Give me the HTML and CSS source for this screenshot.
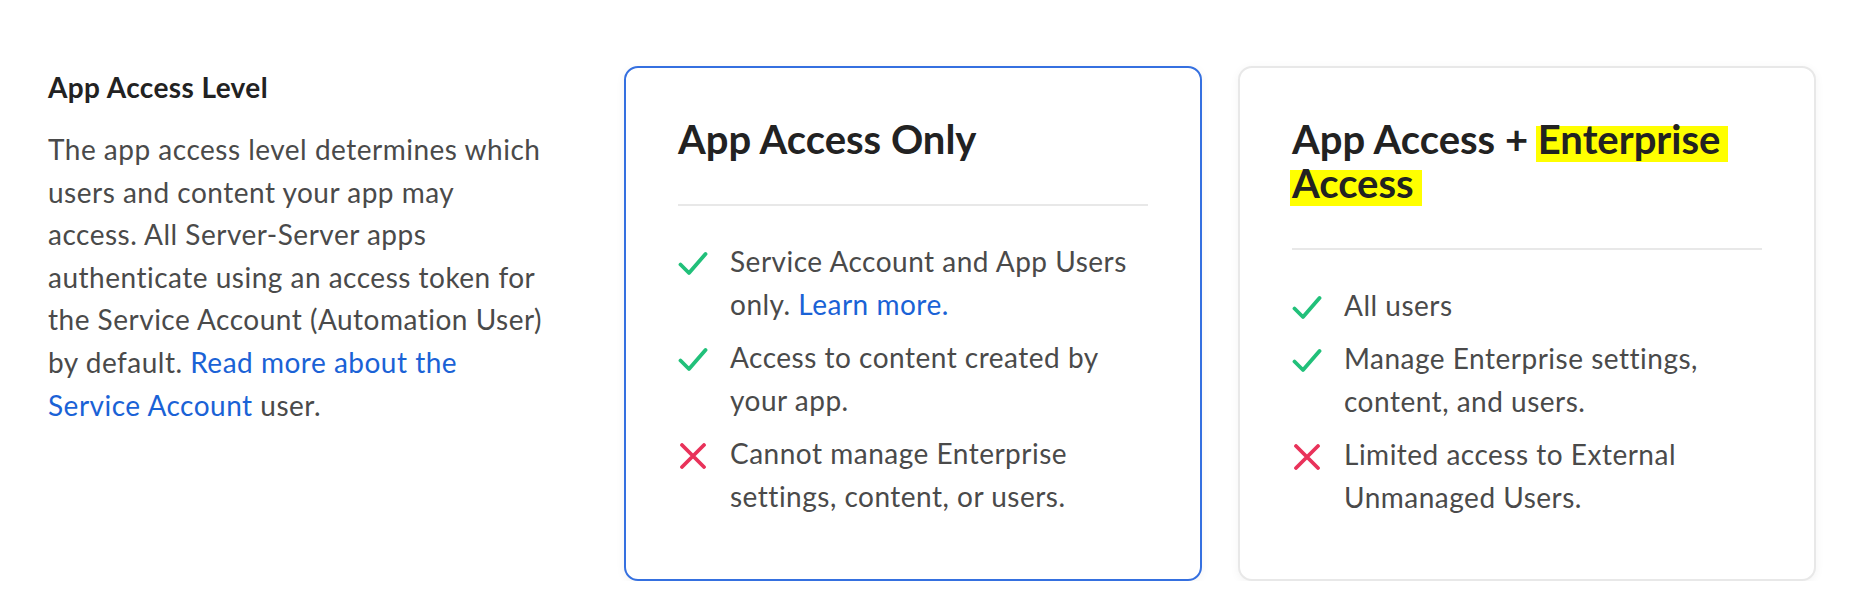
FILE: index.html
```html
<!DOCTYPE html>
<html lang="en">
<head>
  <meta charset="UTF-8" />
  <title>App Access Level</title>
  <link rel="stylesheet" href="styles.css">
</head>
<body>

  <div class="access-level">

    <!-- Description -->
    <div class="intro">
      <h3 class="intro-title">App Access Level</h3>
      <p class="intro-text">
        The app access level determines which users and content your app may access.
        All Server-Server apps authenticate using an access token for the Service Account
        (Automation User) by default. <a href="#">Read more about the Service Account</a> user.
      </p>
    </div>

    <!-- Option cards -->
    <div class="cards">
      <div class="card selected">
        <h2 class="card-title">App Access Only</h2>
        <ul class="features">
          <li class="yes">
            <svg class="icon" viewBox="0 0 30 26"><path d="M2.5 13.5 L11 22 L27.5 3" /></svg>
            <span>Service Account and App Users only. <a href="#">Learn more.</a></span>
          </li>
          <li class="yes">
            <svg class="icon" viewBox="0 0 30 26"><path d="M2.5 13.5 L11 22 L27.5 3" /></svg>
            <span>Access to content created by your app.</span>
          </li>
          <li class="no">
            <svg class="icon" viewBox="0 0 30 26"><path d="M4 2 L26 24 M26 2 L4 24" /></svg>
            <span>Cannot manage Enterprise settings, content, or users.</span>
          </li>
        </ul>
      </div>

      <div class="card">
        <h2 class="card-title">App Access + <mark>Enterprise Access</mark></h2>
        <ul class="features">
          <li class="yes">
            <svg class="icon" viewBox="0 0 30 26"><path d="M2.5 13.5 L11 22 L27.5 3" /></svg>
            <span>All users</span>
          </li>
          <li class="yes">
            <svg class="icon" viewBox="0 0 30 26"><path d="M2.5 13.5 L11 22 L27.5 3" /></svg>
            <span>Manage Enterprise settings, content, and users.</span>
          </li>
          <li class="no">
            <svg class="icon" viewBox="0 0 30 26"><path d="M4 2 L26 24 M26 2 L4 24" /></svg>
            <span>Limited access to External Unmanaged Users.</span>
          </li>
        </ul>
      </div>
    </div>

  </div>

</body>
</html>
```

FILE: styles.css
```css
* {
  margin: 0;
  padding: 0;
  box-sizing: border-box;
}

body {
  font-family: Lato, "Open Sans", sans-serif;
  background-color: #fff;
  color: #4a4a4a;
}

a {
  color: #1a62d6;
  text-decoration: none;
}

.access-level {
  display: flex;
  align-items: flex-start;
  padding: 66px 43px 0 48px;
}

/* left column */
.intro {
  flex: 0 0 576px;
  padding-right: 75px;
}

.intro-title {
  font-size: 28px;
  font-weight: bold;
  color: #222;
  line-height: 32px;
  letter-spacing: 0.4px;
  margin-top: 5px;
}

.intro-text {
  margin-top: 25px;
  font-size: 28px;
  line-height: 42.6px;
  letter-spacing: 0.5px;
}

/* cards */
.cards {
  display: flex;
  gap: 36px;
}

.card {
  width: 578px;
  border: 2px solid #e8e8e8;
  border-radius: 14px;
  padding: 49px 52px 60px;
  background: #fff;
  box-shadow: 0 2px 10px rgba(0, 0, 0, 0.05);
}

.card.selected {
  border-color: #3570e0;
}

.card-title {
  font-size: 40px;
  font-weight: bold;
  color: #222;
  line-height: 44px;
  padding-bottom: 43px;
  border-bottom: 2px solid #e8e8e8;
}

.card-title mark {
  background: linear-gradient(to bottom, transparent 22%, #ffff00 22%, #ffff00 97%, transparent 97%);
  color: inherit;
  padding: 0 8px 0 2px;
  margin-left: -2px;
  -webkit-box-decoration-break: clone;
  box-decoration-break: clone;
}

.features {
  list-style: none;
  margin-top: 34px;
}

.features li {
  display: flex;
  gap: 22px;
  font-size: 28px;
  line-height: 43px;
  letter-spacing: 0.5px;
  margin-bottom: 10px;
}

.features li:last-child {
  margin-bottom: 0;
}

.icon {
  flex: 0 0 30px;
  width: 30px;
  height: 26px;
  margin-top: 11px;
  fill: none;
  stroke-width: 3.8;
  stroke-linecap: round;
  stroke-linejoin: round;
}

.yes .icon {
  stroke: #21c07a;
}

.no .icon {
  stroke: #e9325a;
}
```
